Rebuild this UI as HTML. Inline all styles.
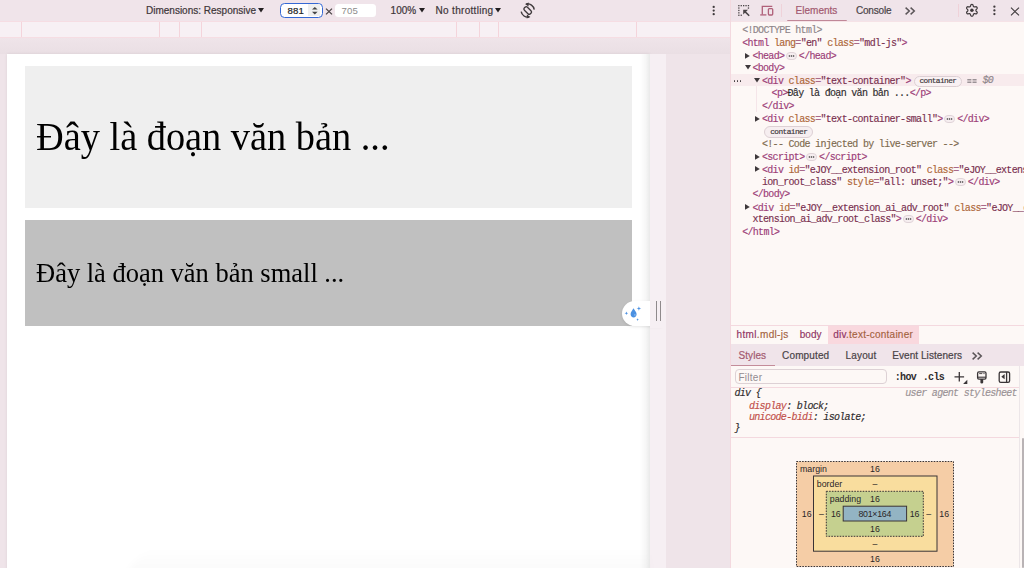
<!DOCTYPE html>
<html><head><meta charset="utf-8"><style>
*{box-sizing:border-box;margin:0;padding:0}
html,body{width:1024px;height:568px;overflow:hidden;background:#efe4e9;font-family:"Liberation Sans",sans-serif}
.a{position:absolute}
.s{position:absolute;white-space:nowrap}
.mono{font-family:"Liberation Mono",monospace;font-size:10px;letter-spacing:-0.69px;white-space:nowrap;-webkit-text-stroke:0.15px currentColor}
.ln{position:absolute;height:12.6px;line-height:12.6px}
.tg{color:#9c3c76}.an{color:#ad6638}.av{color:#7a3050}.eq{color:#a9698a}.gr{color:#8d8589}.cm{color:#7d6a4e}.tx{color:#2f2b2d}
.dots{display:inline-block;width:11px;height:8px;margin:0 1.8px;vertical-align:-1.3px}
.serif{font-family:"Liberation Serif",serif;color:#000;white-space:nowrap;transform-origin:0 0}
.ui{font-size:10.2px;color:#3d3639}
</style></head><body>
<div class="a" style="left:0;top:0;width:731px;height:21px;background:#f0e4ea"></div>
<div class="a" style="left:0;top:21px;width:731px;height:17px;background:#f7f0f4;border-top:1.2px solid #f6dde3;border-bottom:1.2px solid #f6dde3"></div>
<div class="a" style="left:21.0px;top:22px;width:1px;height:15px;background:#f4d4db"></div>
<div class="a" style="left:159.0px;top:22px;width:1px;height:15px;background:#f4d4db"></div>
<div class="a" style="left:178.6px;top:22px;width:1px;height:15px;background:#f4d4db"></div>
<div class="a" style="left:201.0px;top:22px;width:1px;height:15px;background:#f4d4db"></div>
<div class="a" style="left:456.4px;top:22px;width:1px;height:15px;background:#f4d4db"></div>
<div class="a" style="left:478.7px;top:22px;width:1px;height:15px;background:#f4d4db"></div>
<div class="a" style="left:498.3px;top:22px;width:1px;height:15px;background:#f4d4db"></div>
<div class="a" style="left:636.4px;top:22px;width:1px;height:15px;background:#f4d4db"></div>
<div class="a" style="left:0;top:38px;width:731px;height:16px;background:linear-gradient(#efe4e9,#eadfe4)"></div>
<div class="a" style="left:7px;top:53.7px;width:643.4px;height:530px;background:#fff;box-shadow:0 0 3px rgba(0,0,0,.08)"></div>
<div class="a" style="left:640px;top:53.7px;width:10.4px;height:530px;background:linear-gradient(90deg,rgba(0,0,0,0) 0%,rgba(0,0,0,.035) 60%,rgba(0,0,0,.085) 100%)"></div>
<div class="a" style="left:650.4px;top:53.7px;width:15.8px;height:530px;background:#f6eff3"></div>
<div class="a" style="left:656px;top:301px;width:1.3px;height:20px;background:#8f8a8c"></div>
<div class="a" style="left:660px;top:301px;width:1.3px;height:20px;background:#8f8a8c"></div>
<div class="a" style="left:25px;top:65.6px;width:607px;height:142.9px;background:#efefef"></div>
<div class="a" style="left:25px;top:220px;width:607px;height:106px;background:#c0c0c0"></div>
<div class="a serif" style="left:36px;top:113px;font-size:40.8px;line-height:47px;transform:scaleX(0.94)">Đây là đoạn văn bản ...</div>
<div class="a serif" style="left:36px;top:257px;font-size:27.8px;line-height:32px;transform:scaleX(0.953)">Đây là đoạn văn bản small ...</div>
<div class="a" style="left:125px;top:548px;width:525px;height:40px;border-radius:60px 0 0 0;background:linear-gradient(rgba(0,0,0,0),rgba(0,0,0,.035));filter:blur(3px)"></div>
<div class="a" style="left:621.5px;top:300.6px;width:40px;height:25px;border-radius:12.5px 0 0 12.5px;background:#fff;box-shadow:0 1px 3px rgba(0,0,0,.10)"></div>
<div class="a" style="left:650.4px;top:298px;width:15.8px;height:30px;background:#f6eff3"></div>
<div class="a" style="left:656px;top:301px;width:1.3px;height:20px;background:#8f8a8c"></div>
<div class="a" style="left:660px;top:301px;width:1.3px;height:20px;background:#8f8a8c"></div>
<svg class="a" style="left:623px;top:304px" width="20" height="18" viewBox="0 0 20 18">
<path d="M10.5 4.2 C9 6.5 7.6 8.3 7.6 10.3 C7.6 12.2 9 13.5 10.6 13.5 C12.2 13.5 13.6 12.2 13.6 10.3 C13.6 8.3 12 6.5 10.5 4.2Z" fill="#4a90e2"/><circle cx="11.9" cy="10.9" r="0.7" fill="#a8ccf3"/>
<path d="M15.90 2.20 L16.50 3.90 L18.20 4.50 L16.50 5.10 L15.90 6.80 L15.30 5.10 L13.60 4.50 L15.30 3.90Z" fill="#4a90e2"/>
<path d="M3.40 7.40 L3.90 8.70 L5.20 9.20 L3.90 9.70 L3.40 11.00 L2.90 9.70 L1.60 9.20 L2.90 8.70Z" fill="#4a90e2"/>
<path d="M14.60 14.30 L15.00 15.20 L15.90 15.60 L15.00 16.00 L14.60 16.90 L14.20 16.00 L13.30 15.60 L14.20 15.20Z" fill="#4a90e2"/>
</svg>
<span class="s" style="left:146.0px;top:5px;font-size:10px;line-height:12px;letter-spacing:0.000px;color:#3d3639;-webkit-text-stroke:0.2px #3d3639">Dimensions: Responsive</span>
<svg class="a" style="left:258.30px;top:8.00px;overflow:visible" width="1" height="1"><path d="M0 0 L6.00 0 L3.00 4.60Z" fill="#231f21"/></svg>
<div class="a" style="left:280.3px;top:2.8px;width:42.6px;height:15px;border:1.8px solid #3568d4;border-radius:4.5px;background:#fff;overflow:hidden"><div class="a" style="left:27px;top:0;width:12px;height:12px;background:#efefef"></div></div>
<span class="s" style="left:287.6px;top:5px;font-size:9.6px;line-height:12px;letter-spacing:0.100px;color:#222;-webkit-text-stroke:0.2px #222">881</span>
<svg class="a" style="left:311px;top:6px" width="8" height="10" viewBox="0 0 8 10"><path d="M1 3.6 L3.8 0.9 L6.6 3.6Z" fill="#444"/><path d="M1 5.7 L3.8 8.4 L6.6 5.7Z" fill="#444"/></svg>
<svg class="a" style="left:325px;top:8px" width="8" height="7" viewBox="0 0 8 7"><path d="M1 0.6 L7 6.4 M7 0.6 L1 6.4" stroke="#4a4446" stroke-width="1.3"/></svg>
<div class="a" style="left:334.9px;top:4px;width:41.1px;height:12.8px;border-radius:3.5px;background:#fff"></div>
<span class="s" style="left:341.4px;top:5px;font-size:9.6px;line-height:12px;letter-spacing:0.250px;color:#8c8c8c;">705</span>
<span class="s" style="left:390.6px;top:5px;font-size:10px;line-height:12px;letter-spacing:0.000px;color:#3d3639;-webkit-text-stroke:0.2px #3d3639">100%</span>
<svg class="a" style="left:419.00px;top:8.00px;overflow:visible" width="1" height="1"><path d="M0 0 L6.00 0 L3.00 4.60Z" fill="#231f21"/></svg>
<span class="s" style="left:435.6px;top:5px;font-size:10px;line-height:12px;letter-spacing:0.300px;color:#3d3639;-webkit-text-stroke:0.2px #3d3639">No throttling</span>
<svg class="a" style="left:495.20px;top:8.00px;overflow:visible" width="1" height="1"><path d="M0 0 L6.00 0 L3.00 4.60Z" fill="#231f21"/></svg>
<svg class="a" style="left:514px;top:0px" width="28" height="21" viewBox="514 0 28 21">
<rect x="525.55" y="6.30" width="4.3" height="8.4" rx="1.7" fill="none" stroke="#3f3a3c" stroke-width="1.35" transform="rotate(-45 527.70 10.50)"/>
<path d="M526.33 4.04 A6.60 6.60 0 0 1 534.24 9.58" fill="none" stroke="#3f3a3c" stroke-width="1.4"/>
<path d="M521.20 11.65 A6.60 6.60 0 0 0 529.07 16.96" fill="none" stroke="#3f3a3c" stroke-width="1.4"/>
<path d="M525.0 3.9 L528.7 2.5 L528.5 6.4Z" fill="#3f3a3c"/>
<path d="M530.4 17.1 L526.7 18.5 L526.9 14.6Z" fill="#3f3a3c"/>
</svg>
<svg class="a" style="left:705px;top:0" width="18" height="21" viewBox="705 0 18 21"><circle cx="713.7" cy="6.9" r="1.15" fill="#3f3a3c"/><circle cx="713.7" cy="10.55" r="1.15" fill="#3f3a3c"/><circle cx="713.7" cy="14.2" r="1.15" fill="#3f3a3c"/></svg>
<div class="a" style="left:730px;top:0;width:294px;height:568px;background:#fdf8f6;border-left:1px solid #f3d9df"></div>
<div class="a" style="left:731px;top:0;width:293px;height:21px;background:#f0e4ea"></div>
<div class="a" style="left:731px;top:21px;width:293px;height:1px;background:#f6e3e7"></div>
<div class="a" style="left:787px;top:19.6px;width:59.5px;height:1.5px;background:#c08898;border-radius:1px 1px 0 0"></div>
<svg class="a" style="left:730px;top:0px" width="50" height="21" viewBox="730 0 50 21">
<g fill="#4a4446">
<rect x="738.2" y="5" width="1.3" height="1.3"/><rect x="740.6" y="5" width="1.3" height="1.3"/><rect x="743" y="5" width="1.3" height="1.3"/><rect x="745.4" y="5" width="1.3" height="1.3"/><rect x="747.8" y="5" width="1.3" height="1.3"/>
<rect x="738.2" y="7.4" width="1.3" height="1.3"/><rect x="738.2" y="9.8" width="1.3" height="1.3"/><rect x="738.2" y="12.2" width="1.3" height="1.3"/><rect x="738.2" y="14.6" width="1.3" height="1.3"/>
<rect x="740.6" y="14.6" width="1.3" height="1.3"/>
<rect x="747.8" y="7.4" width="1.3" height="1.3"/>
<path d="M743.2 9.8 H748 L743.2 14.6Z"/>
</g>
<path d="M744.5 11.1 L749.2 15.8" stroke="#4a4446" stroke-width="1.5"/>
</svg>
<svg class="a" style="left:750px;top:0px" width="30" height="21" viewBox="750 0 30 21">
<path d="M762.3 14.6 V6.3 H772.3" fill="none" stroke="#b0607a" stroke-width="1.3"/>
<path d="M760.2 14.9 H766.4" stroke="#b0607a" stroke-width="1.3"/>
<rect x="768.4" y="8.7" width="4.3" height="6.3" rx="0.9" fill="none" stroke="#b0607a" stroke-width="1.3"/>
</svg>
<div class="a" style="left:781px;top:4px;width:1px;height:13px;background:#efd2d9"></div>
<span class="s" style="left:795.6px;top:5px;font-size:10px;line-height:12px;letter-spacing:0.000px;color:#a35a70;-webkit-text-stroke:0.2px #a35a70">Elements</span>
<span class="s" style="left:855.9px;top:5px;font-size:10px;line-height:12px;letter-spacing:-0.167px;color:#4a4347;-webkit-text-stroke:0.2px #4a4347">Console</span>
<svg class="a" style="left:904.0px;top:4.8px" width="14" height="12" viewBox="0 0 14 12"><path d="M1.6 2.6 L5.3 6 L1.6 9.4 M6.6 2.6 L10.3 6 L6.6 9.4" fill="none" stroke="#5a5457" stroke-width="1.45"/></svg>
<div class="a" style="left:957.5px;top:4px;width:1px;height:13px;background:#efd2d9"></div>
<svg class="a" style="left:955px;top:0px" width="69" height="21" viewBox="955 0 69 21">
<path d="M975.95 10.30 L975.96 10.44 L975.97 10.58 L976.01 10.73 L976.08 10.89 L976.19 11.06 L976.35 11.25 L976.57 11.46 L976.79 11.70 L976.99 11.95 L977.11 12.20 L977.17 12.43 L977.17 12.65 L977.13 12.85 L977.06 13.04 L976.97 13.23 L976.85 13.40 L976.72 13.55 L976.57 13.69 L976.38 13.80 L976.15 13.87 L975.87 13.88 L975.56 13.84 L975.24 13.76 L974.95 13.68 L974.70 13.63 L974.50 13.62 L974.33 13.64 L974.18 13.69 L974.05 13.74 L973.92 13.81 L973.81 13.88 L973.69 13.97 L973.58 14.08 L973.48 14.21 L973.39 14.39 L973.31 14.63 L973.23 14.92 L973.13 15.24 L973.01 15.53 L972.86 15.76 L972.69 15.93 L972.50 16.04 L972.31 16.10 L972.10 16.14 L971.90 16.15 L971.70 16.14 L971.49 16.10 L971.30 16.04 L971.11 15.93 L970.94 15.76 L970.79 15.53 L970.67 15.24 L970.57 14.92 L970.49 14.63 L970.41 14.39 L970.32 14.21 L970.22 14.08 L970.11 13.97 L969.99 13.88 L969.88 13.81 L969.75 13.74 L969.62 13.69 L969.47 13.64 L969.30 13.62 L969.10 13.63 L968.85 13.68 L968.56 13.76 L968.24 13.84 L967.93 13.88 L967.65 13.87 L967.42 13.80 L967.23 13.69 L967.08 13.55 L966.95 13.40 L966.83 13.23 L966.74 13.04 L966.67 12.85 L966.63 12.65 L966.63 12.43 L966.69 12.20 L966.81 11.95 L967.01 11.70 L967.23 11.46 L967.45 11.25 L967.61 11.06 L967.72 10.89 L967.79 10.73 L967.83 10.58 L967.84 10.44 L967.85 10.30 L967.84 10.16 L967.83 10.02 L967.79 9.87 L967.72 9.71 L967.61 9.54 L967.45 9.35 L967.23 9.14 L967.01 8.90 L966.81 8.65 L966.69 8.40 L966.63 8.17 L966.63 7.95 L966.67 7.75 L966.74 7.56 L966.83 7.38 L966.95 7.20 L967.08 7.05 L967.23 6.91 L967.42 6.80 L967.65 6.73 L967.93 6.72 L968.24 6.76 L968.56 6.84 L968.85 6.92 L969.10 6.97 L969.30 6.98 L969.47 6.96 L969.62 6.91 L969.75 6.86 L969.88 6.79 L969.99 6.72 L970.11 6.63 L970.22 6.52 L970.32 6.39 L970.41 6.21 L970.49 5.97 L970.57 5.68 L970.67 5.36 L970.79 5.07 L970.94 4.84 L971.11 4.67 L971.30 4.56 L971.49 4.50 L971.70 4.46 L971.90 4.45 L972.10 4.46 L972.31 4.50 L972.50 4.56 L972.69 4.67 L972.86 4.84 L973.01 5.07 L973.13 5.36 L973.23 5.68 L973.31 5.97 L973.39 6.21 L973.48 6.39 L973.58 6.52 L973.69 6.63 L973.81 6.72 L973.92 6.79 L974.05 6.86 L974.18 6.91 L974.33 6.96 L974.50 6.98 L974.70 6.97 L974.95 6.92 L975.24 6.84 L975.56 6.76 L975.87 6.72 L976.15 6.73 L976.38 6.80 L976.57 6.91 L976.72 7.05 L976.85 7.20 L976.97 7.37 L977.06 7.56 L977.13 7.75 L977.17 7.95 L977.17 8.17 L977.11 8.40 L976.99 8.65 L976.79 8.90 L976.57 9.14 L976.35 9.35 L976.19 9.54 L976.08 9.71 L976.01 9.87 L975.97 10.02 L975.96 10.16 L975.95 10.30Z" fill="none" stroke="#3f3a3c" stroke-width="1.25" stroke-linejoin="round"/>
<circle cx="971.90" cy="10.30" r="1.75" fill="#3f3a3c"/>
<circle cx="994.4" cy="6.7" r="1.15" fill="#3f3a3c"/><circle cx="994.4" cy="10.4" r="1.15" fill="#3f3a3c"/><circle cx="994.4" cy="14.1" r="1.15" fill="#3f3a3c"/>
</svg>
<svg class="a" style="left:1010px;top:6.5px" width="10" height="9" viewBox="0 0 10 9"><path d="M1 0.6 L9 8.4 M9 0.6 L1 8.4" stroke="#3f3a3c" stroke-width="1.1"/></svg>
<div class="a" style="left:731px;top:73.9px;width:293px;height:12.6px;background:#f8ebed"></div>
<div class="a" style="left:755.6px;top:86.4px;width:1px;height:25.5px;background:#f5e5e9"></div>
<div class="a" style="left:733.8px;top:80px;width:1.6px;height:1.6px;border-radius:50%;background:#3f3a3c;box-shadow:3px 0 0 #3f3a3c,6px 0 0 #3f3a3c"></div>
<div class="a mono" style="left:731px;top:21px;width:293px;height:300px;overflow:hidden">
<div class="ln" style="left:11.20px;top:4px"><span class="gr">&lt;!DOCTYPE html&gt;</span></div>
<div class="ln" style="left:11.20px;top:17px"><span class="tg">&lt;html</span> <span class="an">lang</span><span class="eq">=</span><span class="av">"en"</span> <span class="an">class</span><span class="eq">=</span><span class="av">"mdl-js"</span><span class="tg">&gt;</span></div>
<div class="ln" style="left:21.40px;top:30px"><span class="tg">&lt;head&gt;</span><svg class="dots" width="11" height="8" viewBox="0 0 11 8"><rect x="0.5" y="0.5" width="10" height="7" rx="3.5" fill="#f6eef0" stroke="#e0d4d8" stroke-width="1"/><circle cx="3.4" cy="4" r="0.8" fill="#333"/><circle cx="5.5" cy="4" r="0.8" fill="#333"/><circle cx="7.6" cy="4" r="0.8" fill="#333"/></svg><span class="tg">&lt;/head&gt;</span></div>
<div class="ln" style="left:21.40px;top:42px"><span class="tg">&lt;body&gt;</span></div>
<div class="ln" style="left:31.00px;top:55px"><span class="tg">&lt;div</span> <span class="an">class</span><span class="eq">=</span><span class="av">"text-container"</span><span class="tg">&gt;</span></div>
<div class="ln" style="left:40.60px;top:67px"><span class="tg">&lt;p&gt;</span><span class="tx">Đây là đoạn văn bản ...</span><span class="tg">&lt;/p&gt;</span></div>
<div class="ln" style="left:31.00px;top:80px"><span class="tg">&lt;/div&gt;</span></div>
<div class="ln" style="left:31.00px;top:93px"><span class="tg">&lt;div</span> <span class="an">class</span><span class="eq">=</span><span class="av">"text-container-small"</span><span class="tg">&gt;</span><svg class="dots" width="11" height="8" viewBox="0 0 11 8"><rect x="0.5" y="0.5" width="10" height="7" rx="3.5" fill="#f6eef0" stroke="#e0d4d8" stroke-width="1"/><circle cx="3.4" cy="4" r="0.8" fill="#333"/><circle cx="5.5" cy="4" r="0.8" fill="#333"/><circle cx="7.6" cy="4" r="0.8" fill="#333"/></svg><span class="tg">&lt;/div&gt;</span></div>
<div class="ln" style="left:31.00px;top:118px"><span class="cm">&lt;!-- Code injected by live-server --&gt;</span></div>
<div class="ln" style="left:31.00px;top:131px"><span class="tg">&lt;script&gt;</span><svg class="dots" width="11" height="8" viewBox="0 0 11 8"><rect x="0.5" y="0.5" width="10" height="7" rx="3.5" fill="#f6eef0" stroke="#e0d4d8" stroke-width="1"/><circle cx="3.4" cy="4" r="0.8" fill="#333"/><circle cx="5.5" cy="4" r="0.8" fill="#333"/><circle cx="7.6" cy="4" r="0.8" fill="#333"/></svg><span class="tg">&lt;/script&gt;</span></div>
<div class="ln" style="left:31.00px;top:144px"><span class="tg">&lt;div</span> <span class="an">id</span><span class="eq">=</span><span class="av">"eJOY__extension_root"</span> <span class="an">class</span><span class="eq">=</span><span class="av">"eJOY__extensi</span></div>
<div class="ln" style="left:31.00px;top:156px"><span class="av">ion_root_class"</span> <span class="an">style</span><span class="eq">=</span><span class="av">"all: unset;"</span><span class="tg">&gt;</span><svg class="dots" width="11" height="8" viewBox="0 0 11 8"><rect x="0.5" y="0.5" width="10" height="7" rx="3.5" fill="#f6eef0" stroke="#e0d4d8" stroke-width="1"/><circle cx="3.4" cy="4" r="0.8" fill="#333"/><circle cx="5.5" cy="4" r="0.8" fill="#333"/><circle cx="7.6" cy="4" r="0.8" fill="#333"/></svg><span class="tg">&lt;/div&gt;</span></div>
<div class="ln" style="left:21.40px;top:168px"><span class="tg">&lt;/body&gt;</span></div>
<div class="ln" style="left:21.40px;top:182px"><span class="tg">&lt;div</span> <span class="an">id</span><span class="eq">=</span><span class="av">"eJOY__extension_ai_adv_root"</span> <span class="an">class</span><span class="eq">=</span><span class="av">"eJOY__e</span></div>
<div class="ln" style="left:21.40px;top:193px"><span class="av">xtension_ai_adv_root_class"</span><span class="tg">&gt;</span><svg class="dots" width="11" height="8" viewBox="0 0 11 8"><rect x="0.5" y="0.5" width="10" height="7" rx="3.5" fill="#f6eef0" stroke="#e0d4d8" stroke-width="1"/><circle cx="3.4" cy="4" r="0.8" fill="#333"/><circle cx="5.5" cy="4" r="0.8" fill="#333"/><circle cx="7.6" cy="4" r="0.8" fill="#333"/></svg><span class="tg">&lt;/div&gt;</span></div>
<div class="ln" style="left:11.20px;top:206px"><span class="tg">&lt;/html&gt;</span></div>
</div>
<svg class="a" style="left:745.10px;top:52.84px;overflow:visible" width="1" height="1"><path d="M0 0 L4.80 2.90 L0 5.80Z" fill="#3e383b"/></svg>
<svg class="a" style="left:744.60px;top:64.91px;overflow:visible" width="1" height="1"><path d="M0 0 L6.00 0 L3.00 4.50Z" fill="#3e383b"/></svg>
<svg class="a" style="left:754.10px;top:77.53px;overflow:visible" width="1" height="1"><path d="M0 0 L6.00 0 L3.00 4.50Z" fill="#3e383b"/></svg>
<svg class="a" style="left:754.70px;top:115.94px;overflow:visible" width="1" height="1"><path d="M0 0 L4.80 2.90 L0 5.80Z" fill="#3e383b"/></svg>
<svg class="a" style="left:754.70px;top:153.80px;overflow:visible" width="1" height="1"><path d="M0 0 L4.80 2.90 L0 5.80Z" fill="#3e383b"/></svg>
<svg class="a" style="left:754.70px;top:166.42px;overflow:visible" width="1" height="1"><path d="M0 0 L4.80 2.90 L0 5.80Z" fill="#3e383b"/></svg>
<svg class="a" style="left:745.10px;top:204.28px;overflow:visible" width="1" height="1"><path d="M0 0 L4.80 2.90 L0 5.80Z" fill="#3e383b"/></svg>
<div class="a" style="left:913.5px;top:75.9px;width:48px;height:10.9px;border:1px solid #ddd0d4;border-radius:6px;background:#f9f1f3"></div>
<span class="s mono" style="left:919.4px;top:76px;line-height:11px;font-size:7.8px;letter-spacing:-0.56px;color:#3a3436">container</span>
<svg class="a" style="left:966px;top:76px" width="12" height="10" viewBox="0 0 12 10"><path d="M1.3 3.1h4.1v1.3h-4.1zM1.3 5.6h4.1v1.3h-4.1zM6.5 3.1h4.1v1.3h-4.1zM6.5 5.6h4.1v1.3h-4.1z" fill="#9a9296"/></svg>
<span class="s mono" style="left:982.4px;top:75px;line-height:12px;color:#8d8589;font-style:italic">$0</span>
<div class="a" style="left:764px;top:126.4px;width:48.5px;height:11.3px;border:1px solid #ddd0d4;border-radius:6px;background:#f6eef0"></div>
<span class="s mono" style="left:770.2px;top:127px;line-height:11px;font-size:7.8px;letter-spacing:-0.56px;color:#3a3436">container</span>
<div class="a" style="left:731px;top:324.6px;width:293px;height:1px;background:#f4d9df"></div>
<div class="a" style="left:828.3px;top:325.5px;width:90.5px;height:18.5px;background:#f9d8de"></div>
<div class="a" style="left:731px;top:343.5px;width:293px;height:1px;background:#f1dde2"></div>
<span class="s" style="left:736.6px;top:329px;font-size:10px;line-height:12px;letter-spacing:0.340px;color:#8f3463;-webkit-text-stroke:0.15px currentColor">html<span style="color:#a3623e;-webkit-text-stroke:0.15px #a3623e">.mdl-js</span></span>
<span class="s" style="left:799.7px;top:329px;font-size:10px;line-height:12px;letter-spacing:0.067px;color:#8f3463;-webkit-text-stroke:0.15px currentColor">body</span>
<span class="s" style="left:833.3px;top:329px;font-size:10px;line-height:12px;letter-spacing:0.241px;color:#8f3463;-webkit-text-stroke:0.15px currentColor">div<span style="color:#a3623e;-webkit-text-stroke:0.15px #a3623e">.text-container</span></span>
<div class="a" style="left:731px;top:344px;width:293px;height:22.3px;background:#f0e4ea"></div>
<div class="a" style="left:731px;top:364.8px;width:43.5px;height:1.7px;background:#c48c9a"></div>
<span class="s" style="left:738.5px;top:350px;font-size:10px;line-height:12px;letter-spacing:0.060px;color:#a35a70;-webkit-text-stroke:0.2px #a35a70">Styles</span>
<span class="s" style="left:782.1px;top:350px;font-size:10px;line-height:12px;letter-spacing:0.129px;color:#4a4347;-webkit-text-stroke:0.2px #4a4347">Computed</span>
<span class="s" style="left:845.6px;top:350px;font-size:10px;line-height:12px;letter-spacing:0.140px;color:#4a4347;-webkit-text-stroke:0.2px #4a4347">Layout</span>
<span class="s" style="left:892.3px;top:350px;font-size:10px;line-height:12px;letter-spacing:0.057px;color:#4a4347;-webkit-text-stroke:0.2px #4a4347">Event Listeners</span>
<svg class="a" style="left:970.8px;top:349.6px" width="14" height="12" viewBox="0 0 14 12"><path d="M1.6 2.6 L5.3 6 L1.6 9.4 M6.6 2.6 L10.3 6 L6.6 9.4" fill="none" stroke="#5a5457" stroke-width="1.45"/></svg>
<div class="a" style="left:735.3px;top:369.3px;width:151.3px;height:14.3px;border:1.2px solid #ddd1d5;border-radius:4px;background:#fdf8f6"></div>
<span class="s" style="left:738.5px;top:372px;font-size:10px;line-height:12px;letter-spacing:0.260px;color:#948c90;">Filter</span>
<span class="s mono" style="left:894.8px;top:372px;line-height:12.6px;font-weight:bold;color:#2f2b2d;-webkit-text-stroke:0">:hov</span>
<span class="s mono" style="left:922.8px;top:372px;line-height:12.6px;font-weight:bold;color:#2f2b2d;-webkit-text-stroke:0">.cls</span>
<svg class="a" style="left:950px;top:366px" width="66" height="22" viewBox="950 366 66 22">
<path d="M959.3 372 V381.6 M954.5 376.8 H964.1" stroke="#3a3537" stroke-width="1.3"/>
<path d="M967.3 379.8 V384 H963.1Z" fill="#3a3537"/>
<rect x="977.6" y="371.9" width="8.4" height="7.2" rx="1.3" fill="none" stroke="#3a3537" stroke-width="1.3"/>
<path d="M977.6 377.2 H986" stroke="#3a3537" stroke-width="1.1"/>
<path d="M979.2 373.6 H982.3 M983.4 373.6 H984.6" stroke="#3a3537" stroke-width="0.9"/>
<path d="M980.4 379 H983.2 V382.6 Q983.2 383.6 981.8 383.6 Q980.4 383.6 980.4 382.6Z" fill="#3a3537"/>
<rect x="999.2" y="372" width="10.4" height="10.4" rx="1.6" fill="none" stroke="#3a3537" stroke-width="1.3"/>
<path d="M1006.6 372 V382.4" stroke="#3a3537" stroke-width="1.3"/>
<path d="M1004.6 374.1 V379.3 L1001.3 376.7Z" fill="#3a3537"/>
</svg>
<div class="a" style="left:731px;top:387px;width:288px;height:1px;background:#f4d9df"></div>
<div class="a" style="left:1019px;top:366.3px;width:1px;height:202px;background:#ece6e8"></div>
<span class="s mono" style="left:734.4px;top:388px;line-height:12.6px;color:#2f2b2d;font-style:italic">div {</span>
<span class="s mono" style="left:905.3px;top:388px;line-height:12.6px;color:#9a9295;font-style:italic">user agent stylesheet</span>
<span class="s mono" style="left:749.0px;top:401px;line-height:12.6px;color:#2f2b2d;font-style:italic"><span style="color:#c24f4a">display</span>: block;</span>
<span class="s mono" style="left:749.0px;top:412px;line-height:12.6px;color:#2f2b2d;font-style:italic"><span style="color:#c24f4a">unicode-bidi</span>: isolate;</span>
<span class="s mono" style="left:734.4px;top:423px;line-height:12.6px;color:#2f2b2d;font-style:italic">}</span>
<div class="a" style="left:731px;top:436.8px;width:288px;height:1px;background:#f4d9df"></div>
<div class="a" style="left:1021.5px;top:438px;width:2.5px;height:130px;background:#b9b3b5;border-radius:1px"></div>
<svg class="a" style="left:790px;top:455px" width="170" height="113" viewBox="790 455 170 113">
<rect x="796.5" y="461.5" width="157" height="105" fill="#f5cda6" stroke="#3a3436" stroke-width="1" stroke-dasharray="1.6 1.2"/>
<rect x="813.5" y="476" width="123.5" height="75.2" fill="#f9dd9e" stroke="#3a3436" stroke-width="1"/>
<rect x="826.3" y="491.3" width="97" height="45" fill="#c5d08f" stroke="#3a3436" stroke-width="1" stroke-dasharray="1.6 1.2"/>
<rect x="843.2" y="506.2" width="63.4" height="14.8" fill="#93b4c3" stroke="#3a3436" stroke-width="1"/>
</svg>
<span class="s" style="left:800.0px;top:464px;line-height:10px;font-size:8.8px;color:#2a2628">margin</span>
<span class="s" style="left:875.0px;top:464px;width:60px;margin-left:-30px;text-align:center;line-height:10px;font-size:8.8px;color:#2a2628">16</span>
<span class="s" style="left:816.8px;top:479px;line-height:10px;font-size:8.8px;color:#2a2628">border</span>
<span class="s" style="left:875.0px;top:479px;width:60px;margin-left:-30px;text-align:center;line-height:10px;font-size:8.8px;color:#2a2628">–</span>
<span class="s" style="left:829.8px;top:494px;line-height:10px;font-size:8.8px;color:#2a2628">padding</span>
<span class="s" style="left:875.0px;top:494px;width:60px;margin-left:-30px;text-align:center;line-height:10px;font-size:8.8px;color:#2a2628">16</span>
<span class="s" style="left:806.7px;top:509px;width:60px;margin-left:-30px;text-align:center;line-height:10px;font-size:8.8px;color:#2a2628">16</span>
<span class="s" style="left:821.4px;top:509px;width:60px;margin-left:-30px;text-align:center;line-height:10px;font-size:8.8px;color:#2a2628">–</span>
<span class="s" style="left:835.8px;top:509px;width:60px;margin-left:-30px;text-align:center;line-height:10px;font-size:8.8px;color:#2a2628">16</span>
<span class="s" style="left:858.4px;top:509px;line-height:10px;font-size:8.8px;letter-spacing:-0.25px;color:#2a2628">801×164</span>
<span class="s" style="left:914.6px;top:509px;width:60px;margin-left:-30px;text-align:center;line-height:10px;font-size:8.8px;color:#2a2628">16</span>
<span class="s" style="left:928.8px;top:509px;width:60px;margin-left:-30px;text-align:center;line-height:10px;font-size:8.8px;color:#2a2628">–</span>
<span class="s" style="left:944.2px;top:509px;width:60px;margin-left:-30px;text-align:center;line-height:10px;font-size:8.8px;color:#2a2628">16</span>
<span class="s" style="left:875.0px;top:524px;width:60px;margin-left:-30px;text-align:center;line-height:10px;font-size:8.8px;color:#2a2628">16</span>
<span class="s" style="left:875.0px;top:539px;width:60px;margin-left:-30px;text-align:center;line-height:10px;font-size:8.8px;color:#2a2628">–</span>
<span class="s" style="left:875.0px;top:554px;width:60px;margin-left:-30px;text-align:center;line-height:10px;font-size:8.8px;color:#2a2628">16</span>
</body></html>
